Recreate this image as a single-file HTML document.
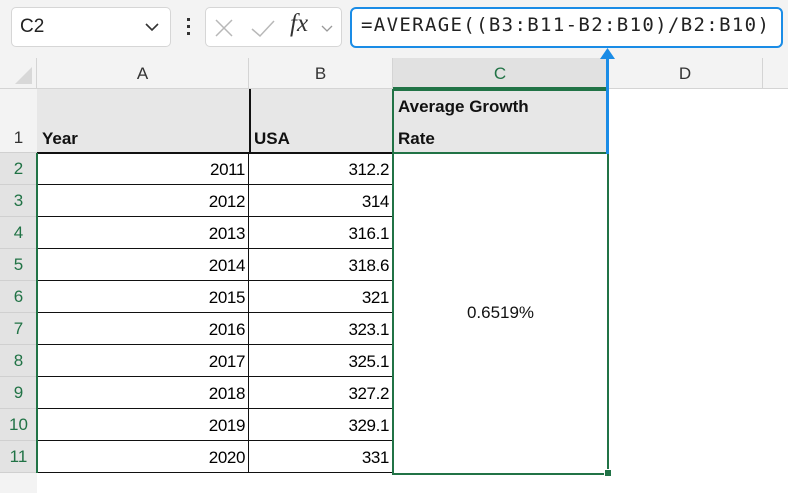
<!DOCTYPE html>
<html><head><style>
*{margin:0;padding:0;box-sizing:border-box}
body{width:788px;height:482px;background:#fff;position:relative;overflow:hidden;font-family:"Liberation Sans",sans-serif}
.a{position:absolute}
.tb{left:0;top:0;width:788px;height:58px;background:#f3f3f3}
.box{background:#fff;border:1px solid #d6d6d6;border-radius:5px}
.ch{top:58px;height:31px;background:#f3f3f3;border-bottom:1px solid #d4d4d4;border-right:1px solid #d4d4d4;text-align:center;line-height:31px;font-size:17px;color:#333}
.rh{left:0;width:37px;height:32px;background:#e3e3e3;border-bottom:1px solid #d0d0d0;text-align:center;line-height:32px;font-size:17px;color:#217346}
.c{height:32px;border-bottom:1.5px solid #111;border-right:1.5px solid #111;text-align:right;padding-right:3px;line-height:34px;font-size:17px;color:#000;letter-spacing:-0.4px}
</style></head><body>
<div class="a tb"></div>
<div class="a box" style="left:11px;top:7px;width:160px;height:40px"></div>
<div class="a" style="left:20px;top:16px;font-size:19px;color:#222">C2</div>
<svg class="a" style="left:144px;top:22px" width="16" height="10"><path d="M2 2 L8 8 L14 2" fill="none" stroke="#333" stroke-width="1.6"/></svg>
<div class="a" style="left:187px;top:18px;width:3px;height:3px;background:#333"></div>
<div class="a" style="left:187px;top:25px;width:3px;height:3px;background:#333"></div>
<div class="a" style="left:187px;top:32px;width:3px;height:3px;background:#333"></div>
<div class="a box" style="left:205px;top:7px;width:137px;height:40px"></div>
<svg class="a" style="left:214px;top:17px" width="120" height="22"><path d="M2 3 L18 19 M18 3 L2 19" stroke="#b8b8b8" stroke-width="1.5"/><path d="M38 12 L46 19 L60 4" fill="none" stroke="#b8b8b8" stroke-width="1.5"/><path d="M108 9 L113 14 L118 9" fill="none" stroke="#999" stroke-width="1.3"/></svg>
<div class="a" style="left:290px;top:10px;font-family:'Liberation Serif',serif;font-style:italic;font-size:25px;color:#333">fx</div>
<div class="a" style="left:350px;top:7px;width:433px;height:41px;background:#fff;border:2.5px solid #1a8ce6;border-radius:6px"></div>
<div class="a" style="left:361px;top:14px;font-family:'DejaVu Sans Mono','Liberation Mono',monospace;font-size:19px;color:#222;letter-spacing:1.35px">=AVERAGE((B3:B11-B2:B10)/B2:B10)</div>

<div class="a ch" style="left:0;width:37px"><svg width="37" height="31"><path d="M32 9 L32 26 L15 26 Z" fill="#d8d8d8"/></svg></div>
<div class="a ch" style="left:37px;width:212px">A</div>
<div class="a ch" style="left:249px;width:144px">B</div>
<div class="a ch" style="left:393px;width:215px;background:#e1e1e1;color:#217346;border-bottom:2px solid #217346">C</div>
<div class="a ch" style="left:608px;width:155px">D</div>
<div class="a ch" style="left:763px;width:30px"></div>

<div class="a" style="left:0;top:89px;width:37px;height:64px;background:#f3f3f3;border-bottom:1px solid #d0d0d0;font-size:17px;color:#333;text-align:center;line-height:98px">1</div>
<div class="a" style="left:37px;top:89px;width:571px;height:64px;background:#e7e7e7"></div>
<div class="a" style="left:42px;top:129px;font-weight:bold;font-size:17px;color:#111">Year</div>
<div class="a" style="left:249px;top:89px;width:1.5px;height:64px;background:#111"></div>
<div class="a" style="left:254px;top:129px;font-weight:bold;font-size:17px;color:#111">USA</div>
<div class="a" style="left:392px;top:89px;width:1.5px;height:64px;background:#111"></div>
<div class="a" style="left:398px;top:91px;font-weight:bold;font-size:17px;color:#111;line-height:32px">Average Growth<br>Rate</div>
<div class="a" style="left:37px;top:152px;width:356px;height:1.5px;background:#111"></div>

<div class="a" style="left:0;top:153px">
<div class="a rh" style="top:0">2</div><div class="a rh" style="top:32px">3</div><div class="a rh" style="top:64px">4</div><div class="a rh" style="top:96px">5</div><div class="a rh" style="top:128px">6</div><div class="a rh" style="top:160px">7</div><div class="a rh" style="top:192px">8</div><div class="a rh" style="top:224px">9</div><div class="a rh" style="top:256px">10</div><div class="a rh" style="top:288px">11</div>
<div class="a" style="top:320px;left:0;width:37px;height:20px;background:#f3f3f3"></div>
</div>
<div class="a" style="left:36px;top:153px;width:2px;height:320px;background:#217346"></div>

<div class="a" style="left:38px;top:153px;width:355px">
<div style="display:flex"><div class="c" style="width:211px">2011</div><div class="c" style="width:144px">312.2</div></div>
<div style="display:flex"><div class="c" style="width:211px">2012</div><div class="c" style="width:144px">314</div></div>
<div style="display:flex"><div class="c" style="width:211px">2013</div><div class="c" style="width:144px">316.1</div></div>
<div style="display:flex"><div class="c" style="width:211px">2014</div><div class="c" style="width:144px">318.6</div></div>
<div style="display:flex"><div class="c" style="width:211px">2015</div><div class="c" style="width:144px">321</div></div>
<div style="display:flex"><div class="c" style="width:211px">2016</div><div class="c" style="width:144px">323.1</div></div>
<div style="display:flex"><div class="c" style="width:211px">2017</div><div class="c" style="width:144px">325.1</div></div>
<div style="display:flex"><div class="c" style="width:211px">2018</div><div class="c" style="width:144px">327.2</div></div>
<div style="display:flex"><div class="c" style="width:211px">2019</div><div class="c" style="width:144px">329.1</div></div>
<div style="display:flex"><div class="c" style="width:211px">2020</div><div class="c" style="width:144px">331</div></div>
</div>

<div class="a" style="left:392px;top:89px;width:217px;height:386px;border:2px solid #217346"></div>
<div class="a" style="left:392px;top:152px;width:217px;height:2px;background:#217346"></div>
<div class="a" style="left:604px;top:469px;width:8px;height:8px;background:#217346;border:1px solid #fff"></div>
<div class="a" style="left:393px;top:303px;width:215px;text-align:center;font-size:17px;color:#111">0.6519%</div>

<div class="a" style="left:606px;top:56px;width:2.5px;height:98px;background:#1a8ce6"></div>
<svg class="a" style="left:599px;top:48px" width="17" height="12"><path d="M8.5 0 L16 11 L1 11 Z" fill="#1a8ce6"/></svg>
</body></html>
